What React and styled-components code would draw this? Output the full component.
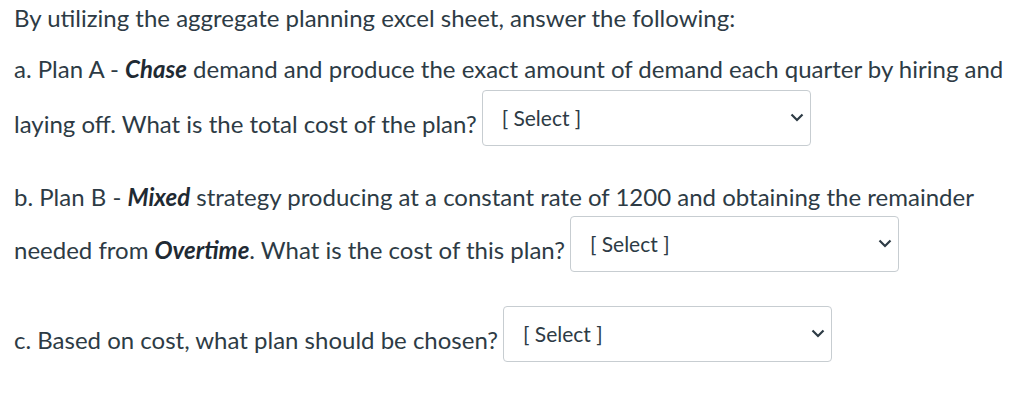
import React from 'react';
import styled, { createGlobalStyle } from 'styled-components';

const Global = createGlobalStyle`
  html, body {
    margin: 0;
    padding: 0;
    background: #ffffff;
  }
  body {
    font-family: Lato, "Liberation Sans", sans-serif;
    color: #2d3b45;
  }
`

const Page = styled.div`
  padding: 0 14px;
  font-size: 24px;
  white-space: nowrap;
`

const Para = styled.p`
  margin: 0;
  line-height: ${(p) => p.$lh || 54}px;
  margin-top: ${(p) => p.$top || 0}px;
`

const Em = styled.strong`
  font-weight: 700;
  font-style: italic;
  color: #1f2a33;
`

const SelectBox = styled.span`
  display: inline-flex;
  align-items: center;
  justify-content: space-between;
  box-sizing: border-box;
  width: 329px;
  height: 56px;
  margin: -4px 0 -4px 5px;
  padding: 0 6px 0 19px;
  border: 1px solid #c7cdd1;
  border-radius: 4px;
  vertical-align: middle;
  position: relative;
  top: -9px;
  font-size: 21px;
  line-height: 1;
  color: #2d3b45;
  background: #fff;
`

const Chevron = () => (
  <svg width="14" height="9" viewBox="0 0 14 9">
    <path d="M1.5 1.5 L7 7 L12.5 1.5" fill="none" stroke="#2d3b45" strokeWidth="2.2" />
  </svg>
)

const Select = () => (
  <SelectBox>
    <span>[ Select ]</span>
    <Chevron />
  </SelectBox>
)

export default function App() {
  return (
    <Page>
      <Global />
      <Para $lh={36} $top={0}>By utilizing the aggregate planning excel sheet, answer the following:</Para>
      <Para $lh={55} $top={5}>
        a. Plan A - <Em>Chase</Em> demand and produce the exact amount of demand each quarter by hiring and
        <br />
        laying off. What is the total cost of the plan?<Select />
      </Para>
      <Para $lh={53} $top={19}>
        b. Plan B - <Em>Mixed</Em> strategy producing at a constant rate of 1200 and obtaining the remainder
        <br />
        needed from <Em>Overtime</Em>. What is the cost of this plan?<Select />
      </Para>
      <Para $lh={54} $top={36}>
        c. Based on cost, what plan should be chosen?<Select />
      </Para>
    </Page>
  );
}
